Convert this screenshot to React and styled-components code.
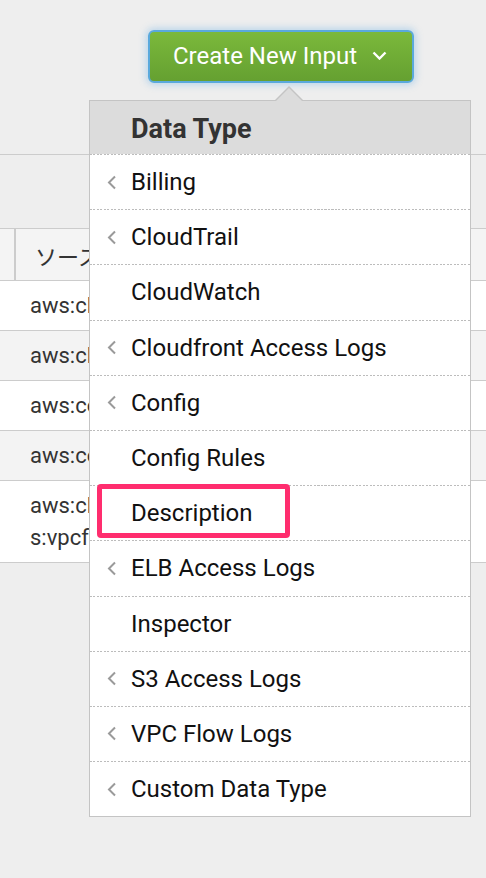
import React from "react";
import styled, { createGlobalStyle } from "styled-components";

const GlobalStyle = createGlobalStyle`
  html, body {
    margin: 0;
    padding: 0;
    background: #eeeeee;
    font-family: Roboto, "Noto Sans CJK JP", "Liberation Sans", sans-serif;
  }
`;

const Page = styled.div`
  width: 486px;
  height: 878px;
  overflow: hidden;
  background: #eeeeee;
`;

const Toolbar = styled.div`
  height: 155px;
  border-bottom: 1px solid #cccccc;
  display: flex;
  justify-content: flex-end;
  align-items: flex-start;
  padding: 30px 72px 0 0;
  box-sizing: border-box;
  margin-bottom: 73px;
`;

const ButtonWrap = styled.div`
  position: relative;
`;

const CreateButton = styled.button`
  width: 266px;
  height: 53px;
  box-sizing: border-box;
  display: flex;
  align-items: center;
  gap: 15px;
  padding: 0 0 2px 23px;
  border: 2px solid #5aa9dc;
  border-radius: 6px;
  background: linear-gradient(#7bb93b, #65a031);
  box-shadow: 0 0 7px 2px rgba(90, 165, 225, 0.35);
  color: #ffffff;
  font-family: Roboto, "Liberation Sans", sans-serif;
  font-size: 24px;
  cursor: pointer;
`;

const Menu = styled.div`
  position: absolute;
  top: 70px;
  left: -59px;
  width: 382px;
  box-sizing: border-box;
  background: #ffffff;
  border: 1px solid #c4c4c4;
  z-index: 5;

  &::before,
  &::after {
    content: "";
    position: absolute;
    left: 185px;
    border-style: solid;
    border-color: transparent;
  }
  &::before {
    top: -15px;
    border-width: 0 14px 14px;
    border-bottom-color: #c4c4c4;
  }
  &::after {
    top: -13px;
    left: 186px;
    border-width: 0 13px 13px;
    border-bottom-color: #dcdcdc;
  }
`;

const MenuHeader = styled.div`
  height: 53px;
  display: flex;
  align-items: center;
  padding: 2px 0 0 41px;
  box-sizing: border-box;
  background: #dcdcdc;
  color: #333333;
  font-size: 27px;
  font-weight: 700;
`;

const MenuItem = styled.div`
  position: relative;
  height: 55.2px;
  box-sizing: border-box;
  padding-top: 1px;
  background-image: repeating-linear-gradient(
    90deg,
    #bcbcbc 0 2px,
    transparent 2px 3.5px
  );
  background-size: 100% 1px;
  background-repeat: no-repeat;
  display: flex;
  align-items: center;
  padding-left: 17px;
  gap: 14px;
  color: #111111;
  font-size: 24px;
`;

const Chevron = styled.span`
  width: 10px;
  height: 15px;
  display: inline-flex;
  visibility: ${(p) => (p.$hidden ? "hidden" : "visible")};
`;

const Highlight = styled.div`
  position: absolute;
  left: 7px;
  top: -1px;
  width: 193px;
  height: 54px;
  box-sizing: border-box;
  border: 5px solid #ff2d6e;
  border-radius: 4px;
  pointer-events: none;
`;

const Table = styled.div`
  border-top: 1px solid #cccccc;
  border-bottom: 1px solid #cccccc;
`;

const HeadRow = styled.div`
  display: flex;
  height: 51px;
  background: #f4f4f4;
  border-bottom: 1px solid #cccccc;
  color: #333333;
  font-size: 22px;
`;

const HeadCell = styled.div`
  display: flex;
  align-items: center;
  width: ${(p) => p.$width || "auto"};
  flex: ${(p) => (p.$width ? "none" : "1")};
  padding-left: ${(p) => p.$pad || 0}px;
  border-right: ${(p) => (p.$divider ? "2px solid #cccccc" : "none")};
`;

const Row = styled.div`
  background: ${(p) => (p.$alt ? "#f3f3f3" : "#ffffff")};
  border-top: ${(p) => (p.$first ? "none" : "1px solid #cccccc")};
  padding: 9px 0 8px 30px;
  color: #333333;
  font-size: 22px;
  line-height: 32px;
`;

const Cell = styled.div`
  width: 210px;
`;

const ChevronLeft = () => (
  <svg width="10" height="15" viewBox="0 0 10 15">
    <polyline points="8,1.5 2,7.5 8,13.5" fill="none" stroke="#9a9a9a" strokeWidth="2" />
  </svg>
);

const ChevronDown = () => (
  <svg width="15" height="9" viewBox="0 0 15 9">
    <polyline points="1.5,1.5 7.5,7.5 13.5,1.5" fill="none" stroke="#ffffff" strokeWidth="2.4" />
  </svg>
);

const dataTypes = [
  { name: "Billing", sub: true },
  { name: "CloudTrail", sub: true },
  { name: "CloudWatch" },
  { name: "Cloudfront Access Logs", sub: true },
  { name: "Config", sub: true },
  { name: "Config Rules" },
  { name: "Description", marked: true },
  { name: "ELB Access Logs", sub: true },
  { name: "Inspector" },
  { name: "S3 Access Logs", sub: true },
  { name: "VPC Flow Logs", sub: true },
  { name: "Custom Data Type", sub: true },
];

const rows = ["aws:cloudtrail", "aws:cloudwatch", "aws:config", "aws:config:rule"];

const App = () => {
  return (
    <Page>
      <GlobalStyle />
      <Toolbar>
        <ButtonWrap>
          <CreateButton>
            Create New Input
            <ChevronDown />
          </CreateButton>
          <Menu>
            <MenuHeader>Data Type</MenuHeader>
            {dataTypes.map((t) => (
              <MenuItem key={t.name}>
                <Chevron $hidden={!t.sub}>
                  <ChevronLeft />
                </Chevron>
                {t.name}
                {t.marked && <Highlight />}
              </MenuItem>
            ))}
          </Menu>
        </ButtonWrap>
      </Toolbar>
      <Table>
        <HeadRow>
          <HeadCell $width="14px" $divider />
          <HeadCell $pad={19}>ソースタイプ</HeadCell>
        </HeadRow>
        {rows.map((r, i) => (
          <Row key={r} $first={i === 0} $alt={i % 2 === 1}>
            <Cell>{r}</Cell>
          </Row>
        ))}
        <Row>
          <Cell>
            aws:cloudwatchlog<wbr />s:vpcflow
          </Cell>
        </Row>
      </Table>
    </Page>
  );
};

export default App;
